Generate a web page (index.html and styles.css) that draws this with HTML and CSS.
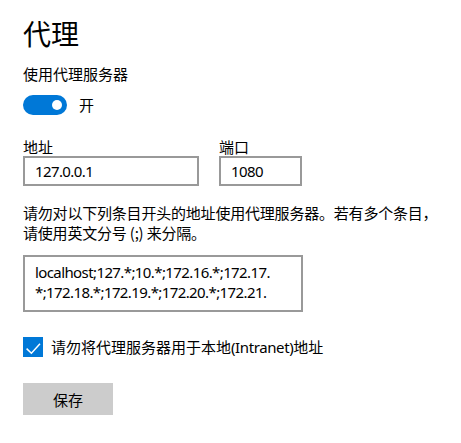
FILE: index.html
```html
<!DOCTYPE html>
<html lang="zh-CN">
<head>
<meta charset="utf-8">
<title>代理</title>
<link rel="stylesheet" href="styles.css">
</head>
<body>
<main class="page">
  <h1 class="title">代理</h1>
  <div class="section-label">使用代理服务器</div>
  <div class="toggle-row">
    <span class="toggle"><span class="knob"></span></span>
    <span class="toggle-text">开</span>
  </div>
  <div class="addr-row">
    <div class="field field-addr">
      <div class="field-label">地址</div>
      <div class="input">127.0.0.1</div>
    </div>
    <div class="field field-port">
      <div class="field-label">端口</div>
      <div class="input">1080</div>
    </div>
  </div>
  <p class="desc">请勿对以下列条目开头的地址使用代理服务器。若有多个条目，<br>请使用英文分号 (;) 来分隔。</p>
  <div class="textarea">
    <span class="line">localhost;127.*;10.*;172.16.*;172.17.</span>
    <span class="line">*;172.18.*;172.19.*;172.20.*;172.21.</span>
  </div>
  <div class="check-row">
    <span class="checkbox">
      <svg width="20" height="20" viewBox="0 0 20 20"><path d="M3.6 11.6 L8.4 16.2 L17 6.8" fill="none" stroke="#fff" stroke-width="1.5"/></svg>
    </span>
    <span class="check-text">请勿将代理服务器用于本地<span class="latin">(Intranet)</span>地址</span>
  </div>
  <button class="btn" type="button">保存</button>
</main>
</body>
</html>
```

FILE: styles.css
```css
html, body {
  margin: 0;
  padding: 0;
  background: #fff;
}
body {
  font-family: "Noto Sans CJK SC", "Noto Sans", sans-serif;
  color: #000;
  font-size: 15px;
  line-height: 20px;
}
.page {
  padding: 15px 0 0 23px;
}
.title {
  margin: 0;
  font-size: 28px;
  line-height: 36px;
  font-weight: 400;
}
.section-label {
  margin-top: 13px;
}
.toggle-row {
  margin-top: 11px;
  display: flex;
  align-items: center;
  height: 20px;
}
.toggle {
  position: relative;
  width: 44px;
  height: 20px;
  border-radius: 10px;
  background: #0078d7;
  box-sizing: border-box;
}
.knob {
  position: absolute;
  right: 5px;
  top: 5px;
  width: 10px;
  height: 10px;
  border-radius: 50%;
  background: #fff;
}
.toggle-text {
  margin-left: 12px;
}
.addr-row {
  margin-top: 22px;
  display: flex;
  gap: 20px;
}
.field-label {
  line-height: 19px;
}
.input {
  box-sizing: border-box;
  height: 30px;
  border: 2px solid #999;
  padding: 0 10px;
  font-family: "Noto Sans", "Noto Sans CJK SC", sans-serif;
  letter-spacing: -0.6px;
  line-height: 26px;
}
.field-addr .input { width: 176px; }
.field-port .input { width: 83px; }
.desc {
  margin: 17px 0 0;
  letter-spacing: -0.2px;
}
.textarea {
  margin-top: 12px;
  box-sizing: border-box;
  width: 280px;
  height: 57px;
  border: 2px solid #999;
  padding: 5px 10px 0;
  font-family: "Noto Sans", "Noto Sans CJK SC", sans-serif;
  letter-spacing: -0.6px;
  overflow: hidden;
}
.line {
  display: block;
  white-space: nowrap;
}
.check-row {
  margin-top: 25px;
  display: flex;
  align-items: center;
  height: 20px;
}
.checkbox {
  width: 20px;
  height: 20px;
  background: #0078d7;
  display: flex;
}
.check-text {
  margin-left: 8px;
}
.latin {
  font-family: "Noto Sans", sans-serif;
  letter-spacing: -0.4px;
}
.btn {
  margin-top: 26px;
  display: block;
  width: 90px;
  height: 32px;
  border: 0;
  background: #ccc;
  font-family: "Noto Sans CJK SC", sans-serif;
  font-size: 15px;
  color: #000;
  padding: 0;
}
```
